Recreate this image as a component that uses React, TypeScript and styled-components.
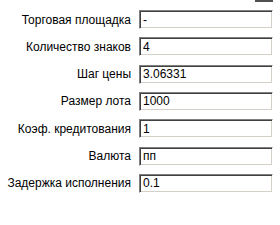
import React from 'react'
import styled, { createGlobalStyle } from 'styled-components'

const fields = [
  { label: 'Торговая площадка', value: '-' },
  { label: 'Количество знаков', value: '4' },
  { label: 'Шаг цены', value: '3.06331' },
  { label: 'Размер лота', value: '1000' },
  { label: 'Коэф. кредитования', value: '1' },
  { label: 'Валюта', value: 'пп' },
  { label: 'Задержка исполнения', value: '0.1' },
]

export default function App() {
  return (
    <>
      <GlobalStyle />
      <Panel>
        <TopStub />
        <Form>
          {fields.map(({ label, value }) => (
            <React.Fragment key={label}>
              <Label>{label}</Label>
              <Field readOnly value={value} />
            </React.Fragment>
          ))}
        </Form>
      </Panel>
    </>
  )
}

// styled components
const GlobalStyle = createGlobalStyle`
  html, body {
    margin: 0;
    padding: 0;
    background: #ffffff;
  }
  body {
    font-family: Tahoma, "DejaVu Sans", "Liberation Sans", sans-serif;
  }
`;

const Panel = styled.div`
  position: relative;
  width: 280px;
  height: 225px;
  background: #ffffff;
  overflow: hidden;
`;

const TopStub = styled.div`
  position: absolute;
  top: 0px;
  left: 255px;
  width: 18px;
  height: 2px;
  background: #505050;
`;

const Form = styled.div`
  display: grid;
  grid-template-columns: 131px 134px;
  grid-auto-rows: 19px;
  column-gap: 8px;
  row-gap: 8.33px;
  padding: 10px 0px 0px 0px;
`;

const Label = styled.span`
  display: flex;
  justify-content: flex-end;
  align-items: center;
  font-family: "Liberation Sans", Arial, sans-serif;
  font-size: 12px;
  color: #000000;
  white-space: nowrap;
`;

const Field = styled.input`
  box-sizing: border-box;
  width: 134px;
  height: 19px;
  margin: 0;
  padding: 0px 3px;
  border-style: solid;
  border-width: 1px;
  border-color: #808080 #ffffff #ffffff #808080;
  box-shadow: inset 1px 1px 0 #404040, inset -1px -1px 0 #d4d0c8;
  background: #ffffff;
  font-family: "Liberation Sans", Arial, sans-serif;
  font-size: 12px;
  color: #000000;
  outline: none;
`;
